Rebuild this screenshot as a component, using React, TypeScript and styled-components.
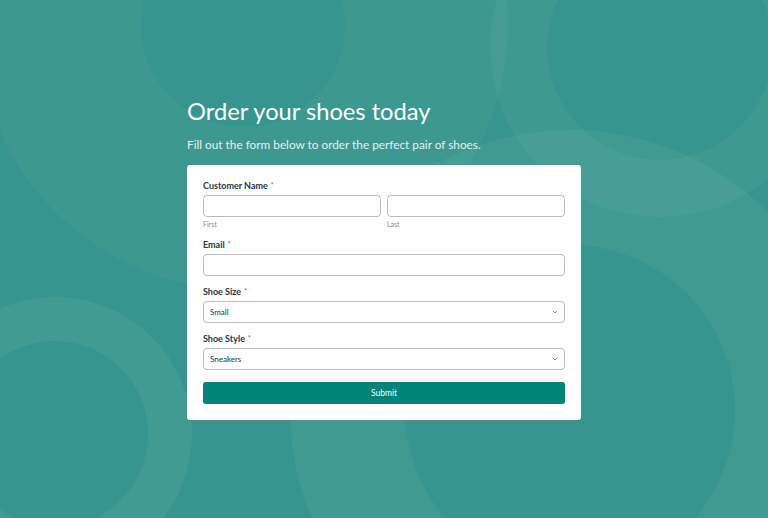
import React from "react";
import styled, { createGlobalStyle } from "styled-components";
import { ChevronDown } from "lucide-react";

const GlobalStyle = createGlobalStyle`
  html, body {
    margin: 0;
    padding: 0;
    background: #36958e;
  }
  * {
    box-sizing: border-box;
  }
`;

const Page = styled.div`
  position: relative;
  width: 100%;
  min-height: 100vh;
  overflow: hidden;
  background: #36958e;
  font-family: "Lato", "Liberation Sans", sans-serif;
`;

const Backdrop = styled.svg`
  position: absolute;
  inset: 0;
  width: 100%;
  height: 100%;
  pointer-events: none;
`;

const Column = styled.main`
  position: relative;
  width: 394px;
  margin: 0 auto;
  padding-top: 97px;
`;

const Title = styled.h1`
  margin: 0;
  font-size: 23.7px;
  line-height: 29px;
  font-weight: 400;
  color: #ffffff;
`;

const Subtitle = styled.p`
  margin: 11px 0 12px;
  font-size: 11.8px;
  line-height: 16px;
  color: #e4f1ef;
`;

const Card = styled.form`
  background: #ffffff;
  border-radius: 3px;
  padding: 15px 16px 16px;
  display: flex;
  flex-direction: column;
  gap: 10px;
`;

const Field = styled.div`
  display: flex;
  flex-direction: column;
`;

const Label = styled.label`
  display: flex;
  align-items: center;
  height: 11px;
  font-size: 9px;
  font-weight: 700;
  color: #2c3345;
  margin-bottom: 4px;
`;

const Required = styled.span`
  color: #e15a4f;
  font-size: 7px;
  line-height: 1;
  margin-left: 3px;
`;

const Split = styled.div`
  display: grid;
  grid-template-columns: 1fr 1fr;
  gap: 6px;
`;

const Input = styled.input`
  display: block;
  width: 100%;
  height: 22px;
  border: 1px solid #b9bcc6;
  border-radius: 4px;
  background: #ffffff;
  padding: 0 6px;
  font-family: inherit;
  outline: none;
`;

const SubLabel = styled.span`
  margin-top: 3px;
  font-size: 7px;
  line-height: 9px;
  color: #858b96;
`;

const SelectWrap = styled.div`
  position: relative;
  height: 22px;
`;

const Select = styled.select`
  display: block;
  width: 100%;
  height: 22px;
  appearance: none;
  border: 1px solid #b9bcc6;
  border-radius: 4px;
  background: #ffffff;
  padding: 0 6px;
  font-family: inherit;
  font-size: 8px;
  color: #2c3345;
  outline: none;
`;

const Chevron = styled(ChevronDown)`
  position: absolute;
  right: 6px;
  top: 7px;
  color: #6f7582;
  pointer-events: none;
`;

const SubmitButton = styled.button`
  margin-top: 2px;
  height: 22px;
  border: none;
  border-radius: 3px;
  background: #008378;
  color: #ffffff;
  font-family: inherit;
  font-size: 8.5px;
  font-weight: 400;
  cursor: pointer;
`;

const Ring = ({ cx, cy, r1, r2, alpha }: { cx: number; cy: number; r1: number; r2: number; alpha: number }) => (
  <path
    fillRule="evenodd"
    fill={`rgba(255,255,255,${alpha})`}
    d={`M${cx - r2},${cy} a${r2},${r2} 0 1,0 ${r2 * 2},0 a${r2},${r2} 0 1,0 ${-r2 * 2},0 Z M${cx - r1},${cy} a${r1},${r1} 0 1,0 ${r1 * 2},0 a${r1},${r1} 0 1,0 ${-r1 * 2},0 Z`}
  />
);

const SelectField = ({ label, value }: { label: string; value: string }) => (
  <Field>
    <Label>
      {label}
      <Required>*</Required>
    </Label>
    <SelectWrap>
      <Select defaultValue={value}>
        <option>{value}</option>
      </Select>
      <Chevron size={8} strokeWidth={2.5} />
    </SelectWrap>
  </Field>
);

export default function App() {
  return (
    <Page>
      <GlobalStyle />
      <Backdrop viewBox="0 0 768 518" preserveAspectRatio="xMidYMid slice">
        <Ring cx={243} cy={25} r1={102} r2={265} alpha={0.03} />
        <Ring cx={660} cy={47} r1={113} r2={170} alpha={0.045} />
        <Ring cx={570} cy={410} r1={165} r2={280} alpha={0.05} />
        <Ring cx={55} cy={434} r1={93} r2={137} alpha={0.06} />
      </Backdrop>
      <Column>
        <Title>Order your shoes today</Title>
        <Subtitle>Fill out the form below to order the perfect pair of shoes.</Subtitle>
        <Card onSubmit={(e) => e.preventDefault()}>
          <Field>
            <Label>
              Customer Name
              <Required>*</Required>
            </Label>
            <Split>
              <Field>
                <Input />
                <SubLabel>First</SubLabel>
              </Field>
              <Field>
                <Input />
                <SubLabel>Last</SubLabel>
              </Field>
            </Split>
          </Field>
          <Field>
            <Label>
              Email
              <Required>*</Required>
            </Label>
            <Input type="email" />
          </Field>
          <SelectField label="Shoe Size" value="Small" />
          <SelectField label="Shoe Style" value="Sneakers" />
          <SubmitButton type="submit">Submit</SubmitButton>
        </Card>
      </Column>
    </Page>
  );
}
